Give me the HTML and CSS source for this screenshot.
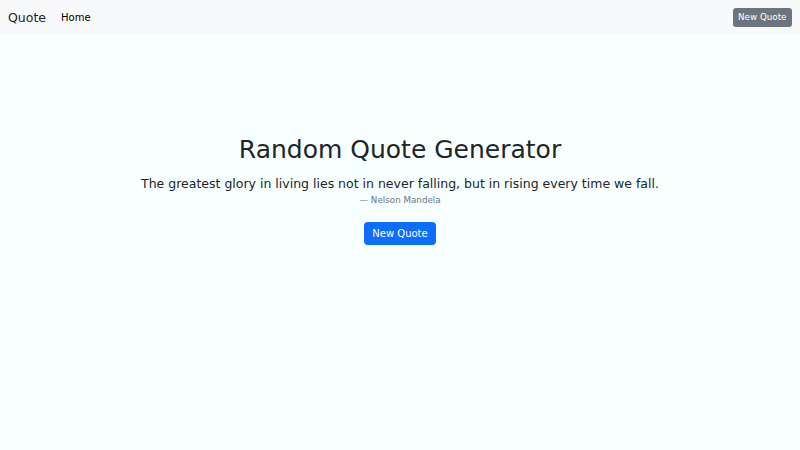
FILE: index.html
```html
<!DOCTYPE html>
<html lang="en">
<head>
    <meta charset="UTF-8">
    <meta name="viewport" content="width=device-width, initial-scale=1.0">
    <title>Quote</title>
    <link rel="stylesheet" href="styles.css">
</head>
<body>
    <nav class="navbar">
        <div class="nav-left">
            <a class="brand" href="#">Quote</a>
            <a class="nav-link" href="#">Home</a>
        </div>
        <button class="btn btn-secondary" id="navQuoteBtn">New Quote</button>
    </nav>

    <main class="quote-box">
        <h1>Random Quote Generator</h1>
        <p class="quote-text" id="quoteText">The greatest glory in living lies not in never falling, but in rising every time we fall.</p>
        <p class="quote-author" id="quoteAuthor">— Nelson Mandela</p>
        <button class="btn btn-primary" id="quoteBtn">New Quote</button>
    </main>
</body>
</html>
```

FILE: styles.css
```css
body {
    margin: 0;
    font-family: 'DejaVu Sans', 'Noto Sans', sans-serif;
    background-color: #f8ffff;
    color: #212529;
}
.navbar {
    display: flex;
    justify-content: space-between;
    align-items: center;
    height: 34px;
    padding: 0 8px;
    background-color: #f8f9fa;
}
.nav-left {
    display: flex;
    align-items: center;
    gap: 15px;
}
.brand {
    font-size: 12.5px;
    color: #212529;
    text-decoration: none;
}
.nav-link {
    font-size: 10px;
    color: #000;
    text-decoration: none;
}
.btn {
    border: none;
    color: white;
    font-family: inherit;
    cursor: pointer;
}
.btn-secondary {
    background-color: #6c757d;
    font-size: 8.75px;
    line-height: 19px;
    padding: 0 5.5px;
    border-radius: 3px;
}
.btn-primary {
    background-color: #0d6efd;
    font-size: 10px;
    line-height: 23px;
    padding: 0 8px;
    border-radius: 4px;
}
.quote-box {
    text-align: center;
    padding-top: 101px;
}
h1 {
    margin: 0;
    font-size: 25px;
    font-weight: 400;
    line-height: 1.2;
}
.quote-text {
    margin: 10px 0 0;
    font-size: 12.5px;
    line-height: 1.5;
}
.quote-author {
    margin: 0 0 15px;
    font-size: 8.75px;
    line-height: 1.5;
    color: #6c757d;
}
```
